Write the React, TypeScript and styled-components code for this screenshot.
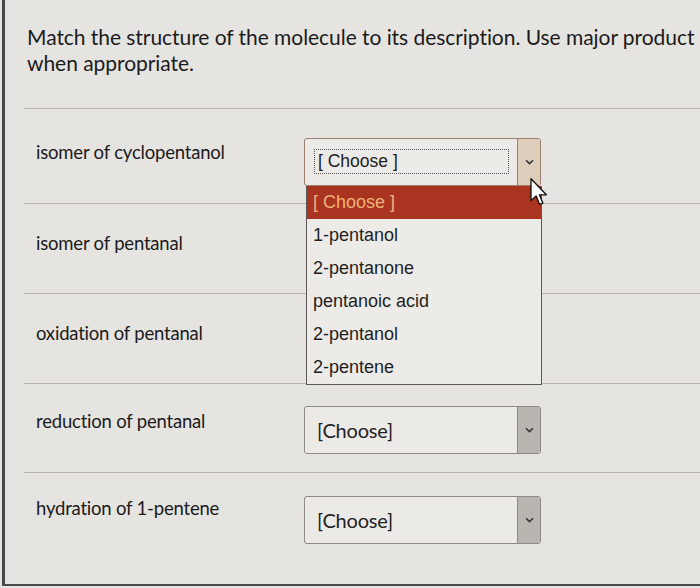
import React from "react";
import styled, { createGlobalStyle } from "styled-components";

const GlobalStyle = createGlobalStyle`
  html, body {
    margin: 0;
    padding: 0;
    background: #e5e3e0;
  }
  body {
    font-family: "Lato", "Liberation Sans", sans-serif;
    color: #1b1b1b;
  }
`;

const Page = styled.div`
  width: 700px;
  height: 588px;
  overflow: hidden;
  padding-left: 2px;
  box-sizing: border-box;
`;

const Frame = styled.div`
  height: 586px;
  border-left: 3px solid #4a4846;
  border-bottom: 2px solid #4a4846;
  box-sizing: border-box;
  background: #e6e4e1;
`;

const Question = styled.p`
  margin: 0;
  padding: 24px 0 0 22px;
  font-size: 21px;
  line-height: 26px;
  letter-spacing: -0.05px;
  white-space: nowrap;
  height: 108px;
  box-sizing: border-box;
`;

const Rows = styled.div`
  margin-left: 19px;
`;

const Row = styled.div<{ $h: number; $top: number }>`
  position: relative;
  display: flex;
  align-items: flex-start;
  height: ${(p) => p.$h}px;
  padding-top: ${(p) => p.$top}px;
  box-sizing: border-box;
  border-top: 1px solid #b9b5b0;
`;

const Label = styled.div<{ $shift: number }>`
  width: 268px;
  padding-left: 12px;
  margin-top: ${(p) => p.$shift}px;
  font-size: 18.5px;
  line-height: 22px;
  letter-spacing: -0.2px;
`;

const SelectBox = styled.div<{ $focus?: boolean }>`
  position: relative;
  display: flex;
  width: 237px;
  height: 48px;
  box-sizing: border-box;
  border: 1px solid ${(p) => (p.$focus ? "#9c7f6d" : "#8e8a86")};
  border-radius: 3px;
  background: #eceae7;
`;

const Value = styled.div<{ $focus?: boolean }>`
  flex: 1;
  display: flex;
  align-items: center;
  padding-left: 12px;
  font-size: 20px;
  letter-spacing: -0.2px;
  color: #222;
  ${(p) =>
    p.$focus &&
    `
    margin: 10px 8px 11px 9px;
    padding-left: 3px;
    border: 1px dotted #555;
    font-family: "Liberation Sans", sans-serif;
    font-size: 17.5px;
    letter-spacing: 0;
  `}
`;

const Arrow = styled.div<{ $focus?: boolean }>`
  width: 22px;
  display: flex;
  align-items: center;
  justify-content: center;
  border-left: 1px solid ${(p) => (p.$focus ? "#9c7f6d" : "#8e8a86")};
  background: ${(p) => (p.$focus ? "#ddcdbb" : "#b9b5b1")};
  border-radius: 0 2px 2px 0;
`;

const Menu = styled.div`
  position: absolute;
  top: 47px;
  left: 1px;
  width: 236px;
  box-sizing: border-box;
  border: 1px solid #5a5754;
  border-top: none;
  background: #edebe8;
  z-index: 2;
`;

const Option = styled.div<{ $active?: boolean }>`
  height: 33px;
  display: flex;
  align-items: center;
  padding-left: 6px;
  font-family: "Liberation Sans", "Arial", sans-serif;
  font-size: 18px;
  color: ${(p) => (p.$active ? "#f0b07a" : "#1f1f1f")};
  background: ${(p) => (p.$active ? "#a9341f" : "transparent")};
`;

const Cursor = styled.svg`
  position: absolute;
  top: 39px;
  left: 225px;
  z-index: 3;
`;

const Chevron = () => (
  <svg width="9" height="6" viewBox="0 0 9 6">
    <polyline points="1,1.2 4.5,4.6 8,1.2" fill="none" stroke="#333" strokeWidth="1.5" />
  </svg>
);

const options = ["[ Choose ]", "1-pentanol", "2-pentanone", "pentanoic acid", "2-pentanol", "2-pentene"];

const rows = [
  { label: "isomer of cyclopentanol", h: 95, top: 29, shift: 3, select: true, open: true },
  { label: "isomer of pentanal", h: 90, top: 24, shift: 4 },
  { label: "oxidation of pentanal", h: 90, top: 24, shift: 4 },
  { label: "reduction of pentanal", h: 89, top: 22, shift: 4, select: true },
  { label: "hydration of 1-pentene", h: 115, top: 23, shift: 1, select: true },
];

const Select = ({ open }: { open?: boolean }) => (
  <SelectBox $focus={open}>
    <Value $focus={open}>{open ? "[ Choose ]" : "[Choose]"}</Value>
    <Arrow $focus={open}>
      <Chevron />
    </Arrow>
    {open && (
      <>
        <Menu>
          {options.map((o, i) => (
            <Option key={o} $active={i === 0}>
              {o}
            </Option>
          ))}
        </Menu>
        <Cursor width="18" height="28" viewBox="0 0 13 21">
          <path
            d="M0.5,0.5 L0.5,17 L4.3,13.4 L7,19.8 L9.4,18.8 L6.8,12.6 L12,12.6 Z"
            fill="#fff"
            stroke="#111"
            strokeWidth="1"
            strokeLinejoin="round"
          />
        </Cursor>
      </>
    )}
  </SelectBox>
);

export default function App() {
  return (
    <Page>
      <GlobalStyle />
      <Frame>
        <Question>
          Match the structure of the molecule to its description. Use major product
          <br />
          when appropriate.
        </Question>
        <Rows>
          {rows.map((r) => (
            <Row key={r.label} $h={r.h} $top={r.top}>
              <Label $shift={r.shift}>{r.label}</Label>
              {r.select && <Select open={r.open} />}
            </Row>
          ))}
        </Rows>
      </Frame>
    </Page>
  );
}
